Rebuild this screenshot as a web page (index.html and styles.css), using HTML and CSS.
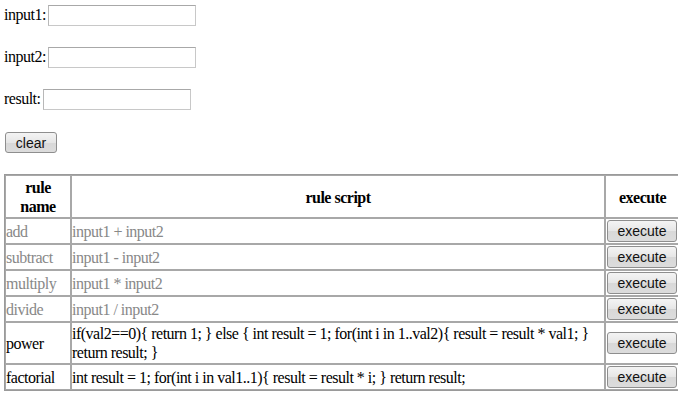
FILE: index.html
```html
<!DOCTYPE html>
<html lang="en">
<head>
    <meta charset="UTF-8">
    <title>Rules</title>
    <link rel="stylesheet" href="styles.css">
</head>
<body>

    <div class="field">
        <label for="input1">input1:</label>
        <input type="text" id="input1">
    </div>
    <div class="field">
        <label for="input2">input2:</label>
        <input type="text" id="input2">
    </div>
    <div class="field">
        <label for="result">result:</label>
        <input type="text" id="result">
    </div>
    <div class="actions">
        <button class="btn btn-clear">clear</button>
    </div>

    <table class="rules">
        <tr>
            <th class="col-name">rule name</th>
            <th class="col-script">rule script</th>
            <th class="col-exec">execute</th>
        </tr>
        <tr class="builtin">
            <td>add</td>
            <td>input1 + input2</td>
            <td><button class="btn">execute</button></td>
        </tr>
        <tr class="builtin">
            <td>subtract</td>
            <td>input1 - input2</td>
            <td><button class="btn">execute</button></td>
        </tr>
        <tr class="builtin">
            <td>multiply</td>
            <td>input1 * input2</td>
            <td><button class="btn">execute</button></td>
        </tr>
        <tr class="builtin">
            <td>divide</td>
            <td>input1 / input2</td>
            <td><button class="btn">execute</button></td>
        </tr>
        <tr>
            <td>power</td>
            <td>if(val2==0){ return 1; } else { int result = 1; for(int i in 1..val2){ result = result * val1; } return result; }</td>
            <td><button class="btn">execute</button></td>
        </tr>
        <tr>
            <td>factorial</td>
            <td>int result = 1; for(int i in val1..1){ result = result * i; } return result;</td>
            <td><button class="btn">execute</button></td>
        </tr>
    </table>

</body>
</html>
```

FILE: styles.css
```css
body {
    font-family: "Liberation Serif", "Times New Roman", serif;
    font-size: 16px;
    letter-spacing: -0.5px;
    margin: 4px;
    color: #000;
}

.field {
    display: flex;
    align-items: center;
    gap: 2px;
    height: 22px;
    margin-bottom: 20px;
}

.field input {
    width: 144px;
    height: 17px;
    padding: 1px;
    border: 1px solid #c8c8c8;
    border-top-color: #a8a8a8;
    border-left-color: #b8b8b8;
    margin: 0;
}

.actions {
    margin: 22px 0 21px 1px;
    height: 21px;
}

.btn {
    font-family: "Liberation Sans", Arial, sans-serif;
    font-size: 14px;
    letter-spacing: 0;
    color: #111;
    height: 21px;
    padding: 0 4px;
    border: 1px solid #8e8e8e;
    border-radius: 3px;
    background: linear-gradient(#f4f4f4, #e6e6e6 50%, #d8d8d8 51%, #dcdcdc);
    cursor: pointer;
}

.btn-clear {
    width: 52px;
}

.rules {
    width: 677px;
    border: 1px solid #9a9a9a;
    border-spacing: 0;
    border-collapse: separate;
}

.rules th,
.rules td {
    border: 1px solid #a8a8a8;
    padding: 1px 0;
    line-height: 19px;
}

.rules th {
    font-weight: bold;
    padding: 2px 0 1px;
}

.col-name {
    width: 64px;
}

.col-exec {
    width: 73px;
}

.builtin td {
    color: #888;
}

.rules td .btn {
    width: 70px;
    height: 22px;
    margin-left: 1px;
}
```
